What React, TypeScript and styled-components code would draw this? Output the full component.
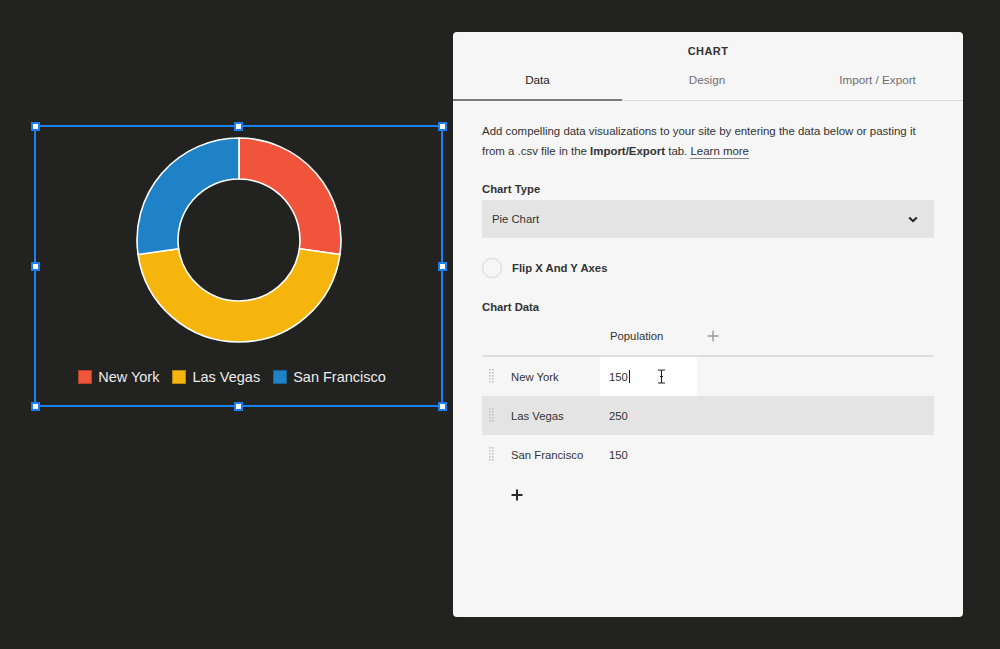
import React from 'react';
import styled, { createGlobalStyle } from 'styled-components';

const GlobalStyle = createGlobalStyle`
  html, body {
    margin: 0;
    padding: 0;
    background: #222221;
  }
  body {
    font-family: "Liberation Sans", Arial, sans-serif;
  }
`

const BLUE = '#1b7ff0'

const slices = [
    { name: 'New York', value: 150, color: '#f0543b' },
    { name: 'Las Vegas', value: 250, color: '#f6b50d' },
    { name: 'San Francisco', value: 150, color: '#1f82c6' },
]

const Page = styled.div`
  display: flex;
  flex-direction: row;
  height: 649px;
  padding-top: 32px;
  box-sizing: border-box;
`

const Stage = styled.div`
  width: 453px;
  padding: 93px 0 0 34px;
  box-sizing: border-box;
`

const Frame = styled.div`
  position: relative;
  width: 409px;
  height: 282px;
  border: 2px solid ${BLUE};
  box-sizing: border-box;
  display: flex;
  flex-direction: column;
  align-items: center;
  padding-top: 9px;
`

const Handle = styled.div<{ $x: string, $y: string }>`
  position: absolute;
  left: ${p => p.$x};
  top: ${p => p.$y};
  width: 5px;
  height: 5px;
  margin: -5.5px 0 0 -5.5px;
  background: #fff;
  border: 2px solid ${BLUE};
`

const Legend = styled.div`
  display: flex;
  flex-direction: row;
  align-items: center;
  gap: 13px;
  margin-top: 25px;
  margin-left: -13px;
`

const LegendItem = styled.div`
  display: flex;
  align-items: center;
  gap: 6px;
  color: #ececec;
  font-size: 14.5px;
`

const Swatch = styled.span<{ $color: string }>`
  width: 12px;
  height: 12px;
  background: ${p => p.$color};
  border: 1px solid rgba(0,0,0,0.25);
`

const Panel = styled.div`
  width: 510px;
  height: 585px;
  background: #f6f6f6;
  border-radius: 4px;
  color: #2a2a2a;
  display: flex;
  flex-direction: column;
`

const Title = styled.div`
  text-align: center;
  font-size: 11px;
  font-weight: bold;
  letter-spacing: 0.4px;
  color: #333;
  padding-top: 13px;
  height: 27px;
  box-sizing: border-box;
`

const Tabs = styled.div`
  display: grid;
  grid-template-columns: 169px 170px 171px;
  border-bottom: 1px solid #dcdcdc;
`

const Tab = styled.div<{ $active?: boolean }>`
  text-align: center;
  font-size: 11.7px;
  color: ${p => p.$active ? '#222' : '#6f6f6f'};
  height: 42px;
  padding-top: 14px;
  box-sizing: border-box;
  margin-bottom: -1px;
  border-bottom: ${p => p.$active ? '2px solid #7a7a7a' : '1px solid #dcdcdc'};
`

const Body = styled.div`
  padding: 20px 29px 0 29px;
  display: flex;
  flex-direction: column;
`

const Intro = styled.p`
  margin: 0;
  font-size: 11.45px;
  line-height: 20px;
  color: #333;

  b {
    font-weight: bold;
  }
  a {
    color: #333;
    text-decoration: none;
    border-bottom: 1px solid #888;
    padding-bottom: 1px;
  }
`

const Label = styled.div<{ $gap: number }>`
  font-size: 11.3px;
  font-weight: bold;
  color: #333;
  margin-top: ${p => p.$gap}px;
  margin-bottom: 5px;
`

const SelectBox = styled.div`
  height: 38px;
  background: #e4e4e4;
  display: flex;
  align-items: center;
  justify-content: space-between;
  padding: 0 16px 0 10px;
  font-size: 11.3px;
  color: #333;
`

const ToggleRow = styled.div`
  display: flex;
  align-items: center;
  gap: 10px;
  margin-top: 20px;
  font-size: 11.3px;
  font-weight: bold;
  color: #333;
`

const Circle = styled.span`
  width: 18px;
  height: 18px;
  border-radius: 50%;
  border: 1px solid #d6d6d6;
  background: #f6f6f6;
`

const DataGrid = styled.div`
  display: flex;
  flex-direction: column;
`

const HeadRow = styled.div`
  display: grid;
  grid-template-columns: 118px 107px 24px;
  align-items: center;
  height: 38px;
  border-bottom: 2px solid #dedede;
  font-size: 11.3px;
  color: #333;
  margin-top: -1px;
`

const Row = styled.div<{ $shade?: boolean }>`
  display: grid;
  grid-template-columns: 29px 89px 97px;
  align-items: center;
  height: 39px;
  font-size: 11.3px;
  color: #333;
  background: ${p => p.$shade ? '#e4e4e4' : 'transparent'};
`

const Cell = styled.div<{ $editing?: boolean }>`
  height: 100%;
  display: flex;
  align-items: center;
  padding-left: 9px;
  background: ${p => p.$editing ? '#fff' : 'transparent'};
  position: relative;
`

const Caret = styled.span`
  display: inline-block;
  width: 1px;
  height: 13px;
  background: #222;
  margin-left: 1px;
`

const Beam = styled.svg`
  position: absolute;
  left: 57px;
  top: 12px;
`

const AddRow = styled.div`
  padding: 13px 0 0 29px;
`

function Donut() {
    const total = slices.reduce((s, d) => s + d.value, 0)
    const R = 102, r = 61, c = 104
    let a0 = -Math.PI / 2
    const pt = (rad: number, a: number) => `${c + rad * Math.cos(a)} ${c + rad * Math.sin(a)}`
    return (
        <svg width="208" height="208" viewBox="0 0 208 208">
            {slices.map(s => {
                const a1 = a0 + (s.value / total) * Math.PI * 2
                const large = a1 - a0 > Math.PI ? 1 : 0
                const d = `M ${pt(R, a0)} A ${R} ${R} 0 ${large} 1 ${pt(R, a1)} L ${pt(r, a1)} A ${r} ${r} 0 ${large} 0 ${pt(r, a0)} Z`
                a0 = a1
                return <path key={s.name} d={d} fill={s.color} stroke="#fff" strokeWidth="1.6" strokeLinejoin="round" />
            })}
        </svg>
    )
}

function DragDots() {
    const dots = []
    for (let row = 0; row < 5; row++) {
        for (let col = 0; col < 2; col++) {
            dots.push(<rect key={`${row}-${col}`} x={col * 3} y={row * 3} width="1.6" height="1.6" fill="#c2c2c2" />)
        }
    }
    return <svg width="6" height="15" style={{ marginLeft: 7 }}>{dots}</svg>
}

function Plus({ color, weight }: { color: string, weight: number }) {
    return (
        <svg width="12" height="12" viewBox="0 0 12 12">
            <path d="M6 0.5V11.5M0.5 6H11.5" stroke={color} strokeWidth={weight} />
        </svg>
    )
}

export default function App() {
    const near = '0px', mid = 'calc(50% + 1px)', far = 'calc(100% + 2px)'
    const handles = [
        [near, near], [mid, near], [far, near],
        [near, mid], [far, mid],
        [near, far], [mid, far], [far, far],
    ]
    return (
        <Page>
            <GlobalStyle />
            <Stage>
                <Frame>
                    <Donut />
                    <Legend>
                        {slices.map(s => (
                            <LegendItem key={s.name}>
                                <Swatch $color={s.color} />
                                {s.name}
                            </LegendItem>
                        ))}
                    </Legend>
                    {handles.map(([x, y]) => <Handle key={x + y} $x={x} $y={y} />)}
                </Frame>
            </Stage>
            <Panel>
                <Title>CHART</Title>
                <Tabs>
                    <Tab $active>Data</Tab>
                    <Tab>Design</Tab>
                    <Tab>Import / Export</Tab>
                </Tabs>
                <Body>
                    <Intro>
                        Add compelling data visualizations to your site by entering the data below or pasting it
                        from a .csv file in the <b>Import/Export</b> tab. <a>Learn more</a>
                    </Intro>
                    <Label $gap={22}>Chart Type</Label>
                    <SelectBox>
                        Pie Chart
                        <svg width="10" height="7" viewBox="0 0 10 7">
                            <path d="M1.2 1.5L5 5.2L8.8 1.5" fill="none" stroke="#222" strokeWidth="2" />
                        </svg>
                    </SelectBox>
                    <ToggleRow>
                        <Circle />
                        Flip X And Y Axes
                    </ToggleRow>
                    <Label $gap={23}>Chart Data</Label>
                    <DataGrid>
                        <HeadRow>
                            <span />
                            <span style={{ paddingLeft: 10 }}>Population</span>
                            <Plus color="#9a9a9a" weight={1.4} />
                        </HeadRow>
                        <Row>
                            <DragDots />
                            <span>New York</span>
                            <Cell $editing>
                                150<Caret />
                                <Beam width="9" height="15" viewBox="0 0 9 15">
                                    <path d="M1 1H3.5Q4.5 1 4.5 2V13Q4.5 14 3.5 14H1M8 1H5.5Q4.5 1 4.5 2M4.5 13Q4.5 14 5.5 14H8M3 7.5H6" fill="none" stroke="#222" strokeWidth="1.1" />
                                </Beam>
                            </Cell>
                        </Row>
                        <Row $shade>
                            <DragDots />
                            <span>Las Vegas</span>
                            <Cell>250</Cell>
                        </Row>
                        <Row>
                            <DragDots />
                            <span>San Francisco</span>
                            <Cell>150</Cell>
                        </Row>
                    </DataGrid>
                    <AddRow>
                        <Plus color="#2a2a2a" weight={2} />
                    </AddRow>
                </Body>
            </Panel>
        </Page>
    )
}
